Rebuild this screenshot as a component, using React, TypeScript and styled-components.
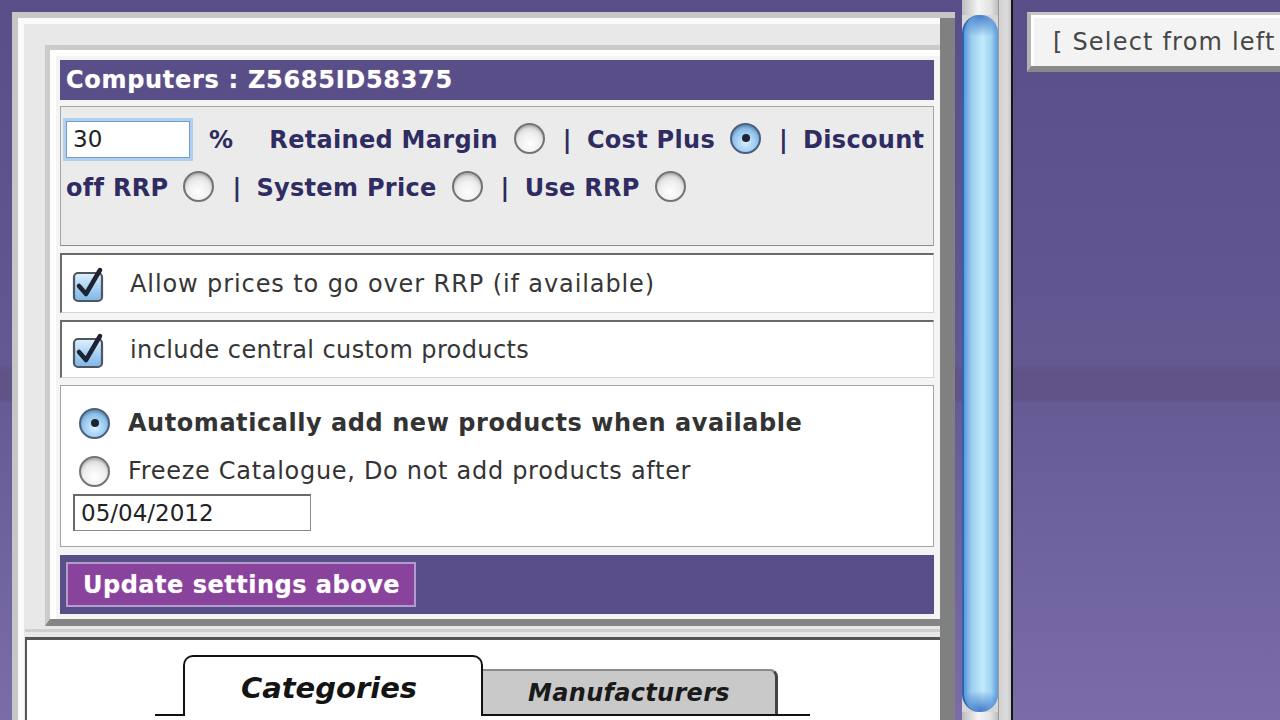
import React from "react";
import styled, { createGlobalStyle } from "styled-components";

const Global = createGlobalStyle`
  html, body {
    margin: 0;
    padding: 0;
    width: 1280px;
    height: 720px;
    overflow: hidden;
  }
  body {
    font-family: "DejaVu Sans", Verdana, sans-serif;
    background: linear-gradient(180deg, #5a4e88 0%, #625690 41%, #655992 50.5%, #5f5387 51.5%, #5f5387 55.5%, #675b95 56%, #7a6da7 100%);
  }
  * { box-sizing: border-box; }
`;

const Page = styled.div`
  display: flex;
  width: 1280px;
  height: 720px;
`;

const LeftPane = styled.div`
  flex: none;
  width: 940px;
  height: 720px;
  padding: 12px 0 0 12px;
  display: flex;
`;

const Frame = styled.div`
  flex: 1;
  display: flex;
  flex-direction: column;
  background: #e8e8e8;
  border-top: 6px solid #c6c6c6;
  border-left: 6px solid #c6c6c6;
  box-shadow: inset 6px 6px 0 #fafafa;
  padding-left: 7px;
`;

const InnerPanel = styled.div`
  margin: 27px 0 0 20px;
  display: flex;
  flex-direction: column;
  background: #f4f4f4;
  border-top: 5px solid #cbcbcb;
  border-left: 5px solid #cbcbcb;
  border-bottom: 7px solid #858585;
  box-shadow: inset 6px 6px 0 #ffffff;
  padding: 10px 6px 5px 10px;
`;

const Header = styled.div`
  height: 40px;
  line-height: 41px;
  background: #5a4e88;
  color: #ffffff;
  font-weight: bold;
  font-size: 24px;
  letter-spacing: 0.7px;
  padding-left: 6px;
  text-shadow: 0 0 1px rgba(255, 255, 255, 0.5);
`;

const Options = styled.div`
  margin-top: 6px;
  height: 140px;
  background: #ebebeb;
  border: 1px solid #a6a6a6;
  border-bottom-color: #8c8c8c;
  padding: 9px 0 0 5px;
  font-weight: bold;
  font-size: 24px;
  letter-spacing: 0.3px;
  line-height: 48px;
  color: #2f2c62;
`;

const Label = styled.span``;

const NumInput = styled.input`
  display: inline-block;
  vertical-align: middle;
  width: 124px;
  height: 37px;
  margin: 0;
  border: 1px solid #6f9fd2;
  box-shadow: 0 0 0 3px #b3cfee;
  background: #ffffff;
  font-family: "DejaVu Sans", Verdana, sans-serif;
  font-size: 23px;
  color: #222;
  padding: 0 0 0 6px;
  outline: none;
  position: relative;
  top: -2px;
`;

const Pct = styled.span`
  margin: 0 36px 0 19px;
`;

const Sep = styled.span`
  font-weight: bold;
  margin: 0 15px 0 18px;
`;

const RadioDot = styled.span<{ $on?: boolean; $gap?: number }>`
  display: inline-block;
  vertical-align: middle;
  position: relative;
  top: -3px;
  width: 31px;
  height: 31px;
  border-radius: 50%;
  margin-left: ${(p) => p.$gap ?? 15}px;
  border: 2px solid ${(p) => (p.$on ? "#4a5f7e" : "#737373")};
  background: ${(p) =>
    p.$on
      ? "radial-gradient(circle at 50% 65%, #d7efff 0%, #9fcdf1 45%, #5f98cf 100%)"
      : "radial-gradient(circle at 50% 70%, #ffffff 0%, #efefef 45%, #c4c4c4 100%)"};
  box-shadow: inset 0 2px 2px rgba(0, 0, 0, 0.18);
  &::after {
    content: "";
    display: ${(p) => (p.$on ? "block" : "none")};
    position: absolute;
    left: 50%;
    top: 50%;
    width: 8px;
    height: 8px;
    margin: -4px 0 0 -4px;
    border-radius: 50%;
    background: #1c2530;
  }
`;

const CheckRow = styled.div<{ $h: number; $ls: number }>`
  margin-top: 7px;
  height: ${(p) => p.$h}px;
  display: flex;
  align-items: center;
  gap: 24px;
  padding-left: 10px;
  background: #ffffff;
  border-top: 2px solid #6a6a6a;
  border-left: 2px solid #6a6a6a;
  border-right: 1px solid #d4d4d4;
  border-bottom: 1px solid #d4d4d4;
  font-size: 24px;
  letter-spacing: ${(p) => p.$ls}px;
  color: #363636;
`;

const Box = styled.div`
  margin-top: 7px;
  height: 162px;
  background: #ffffff;
  border: 1px solid #a4a4a4;
  padding: 13px 0 0 12px;
  display: flex;
  flex-direction: column;
  font-size: 24px;
  color: #333333;
`;

const ChoiceRow = styled.div<{ $bold?: boolean }>`
  height: 48px;
  display: flex;
  align-items: center;
  gap: 18px;
  padding-left: 6px;
  font-weight: ${(p) => (p.$bold ? "bold" : "normal")};
  letter-spacing: ${(p) => (p.$bold ? "0.55px" : "0.7px")};
`;

const ChoiceRadio = styled(RadioDot)`
  top: 0;
  margin-left: 0;
  flex: none;
`;

const DateInput = styled.input`
  width: 238px;
  height: 37px;
  margin: -1px 0 0 0;
  border: 1px solid #8a8a8a;
  border-top: 2px solid #6a6a6a;
  border-left: 2px solid #6a6a6a;
  background: #ffffff;
  font-family: "DejaVu Sans", Verdana, sans-serif;
  font-size: 23px;
  color: #222;
  padding: 0 0 0 6px;
  outline: none;
`;

const ButtonBar = styled.div`
  margin-top: 8px;
  height: 59px;
  background: #5a4e88;
  padding: 7px 6px;
  display: flex;
`;

const UpdateButton = styled.button`
  width: 350px;
  height: 45px;
  background: #8a439d;
  border: 2px solid #b29ccb;
  color: #ffffff;
  font-family: "DejaVu Sans", Verdana, sans-serif;
  font-weight: bold;
  font-size: 24px;
  letter-spacing: 0.5px;
  text-align: left;
  padding: 0 0 0 15px;
  text-shadow: 0 0 1px rgba(255, 255, 255, 0.5);
  cursor: pointer;
`;

const FrameRule = styled.div`
  margin-top: 3px;
  height: 3px;
  background: #cfcfcf;
`;

const TabBox = styled.div`
  flex: 1;
  margin-top: 5px;
  background: #ffffff;
  border-top: 3px solid #555555;
  border-left: 2px solid #555555;
  padding: 16px 0 0 128px;
`;

const TabStrip = styled.div`
  width: 655px;
  height: 60px;
  display: flex;
  align-items: flex-end;
  padding-left: 28px;
  border-bottom: 2px solid #111111;
`;

const ActiveTab = styled.div`
  width: 300px;
  height: 61px;
  margin-bottom: -2px;
  display: flex;
  align-items: flex-start;
  justify-content: center;
  padding: 14px 8px 0 0;
  background: #ffffff;
  border: 2px solid #111111;
  border-bottom: none;
  border-radius: 10px 10px 0 0;
  font-weight: bold;
  font-style: italic;
  font-size: 29px;
  color: #141414;
`;

const Tab = styled.div`
  width: 295px;
  height: 45px;
  display: flex;
  align-items: center;
  justify-content: center;
  padding-top: 1px;
  background: #c9c9c9;
  border-top: 2px solid #8a8a8a;
  border-right: 3px solid #444444;
  border-radius: 0 8px 0 0;
  font-weight: bold;
  font-style: italic;
  font-size: 24px;
  letter-spacing: 0.3px;
  color: #1a1a1a;
`;

const ScrollCol = styled.div`
  flex: none;
  width: 73px;
  height: 720px;
  display: flex;
`;

const Rail = styled.div`
  width: 15px;
  background: linear-gradient(180deg, transparent 0 12px, #c6c6c6 12px 18px, #808080 18px);
`;

const Gutter = styled.div`
  width: 7px;
`;

const Track = styled.div`
  width: 36px;
  display: flex;
  flex-direction: column;
  background: #d6d6d6;
`;

const TrackCap = styled.div<{ $h: number }>`
  height: ${(p) => p.$h}px;
  flex: none;
  background: linear-gradient(90deg, #bdbdbd, #f4f4f4 45%, #e2e2e2 80%, #bdbdbd);
`;

const Thumb = styled.div`
  flex: 1;
  border-radius: 18px;
  border-left: 2px solid #2c63b5;
  background:
    radial-gradient(ellipse 80% 22px at 50% 100%, rgba(40, 100, 190, 0.85), rgba(40, 100, 190, 0) 100%),
    radial-gradient(ellipse 80% 22px at 50% 0%, rgba(40, 100, 190, 0.8), rgba(40, 100, 190, 0) 100%),
    linear-gradient(90deg, #5a96da 0%, #9ccdf0 22%, #c2ebfb 55%, #9ed3f2 80%, #5a96d8 100%);
  box-shadow: inset -1px 0 0 #6f9fd0;
`;

const LightRail = styled.div`
  width: 13px;
  background: linear-gradient(90deg, #9a9a9a 0 1px, #d2d2d2 1px, #dcdcdc 70%, #c4c4c4);
`;

const DarkLine = styled.div`
  width: 2px;
  background: #151515;
`;

const RightPane = styled.div`
  flex: 1;
  min-width: 0;
  overflow: hidden;
  padding: 12px 0 0 14px;
`;

const SelectBox = styled.div`
  width: 320px;
  height: 60px;
  display: flex;
  align-items: center;
  padding: 3px 0 0 22px;
  white-space: nowrap;
  background: #f3f3f3;
  border-top: 3px solid #c6c6c6;
  border-left: 4px solid #b4b4b4;
  border-bottom: 6px solid #898989;
  box-shadow: inset 3px 3px 0 #ffffff;
  font-size: 24px;
  letter-spacing: 1.2px;
  color: #464646;
`;

const CheckIcon = () => (
  <svg width="34" height="40" viewBox="0 0 34 40" style={{ flex: "none" }}>
    <defs>
      <linearGradient id="cbfill" x1="0" y1="0" x2="0" y2="1">
        <stop offset="0" stopColor="#e2f1fd" />
        <stop offset="0.5" stopColor="#a9d2f4" />
        <stop offset="1" stopColor="#7fb6e6" />
      </linearGradient>
    </defs>
    <rect x="2" y="9" width="28" height="28" rx="4" fill="url(#cbfill)" stroke="#4f5561" strokeWidth="2.2" />
    <path d="M7 22 L14 30 L28 6" fill="none" stroke="#1d2330" strokeWidth="4.5" strokeLinecap="round" strokeLinejoin="round" />
  </svg>
);

export default function App() {
  return (
    <>
      <Global />
      <Page>
        <LeftPane>
          <Frame>
            <InnerPanel>
              <Header>Computers : Z5685ID58375</Header>
              <Options>
                <NumInput defaultValue="30" />
                <Pct>%</Pct>
                <Label>Retained Margin</Label>
                <RadioDot $gap={16} />
                <Sep>|</Sep>
                <Label>Cost Plus</Label>
                <RadioDot $on />
                <Sep>|</Sep>
                <Label>Discount</Label> <Label>off RRP</Label>
                <RadioDot />
                <Sep>|</Sep>
                <Label>System Price</Label>
                <RadioDot />
                <Sep>|</Sep>
                <Label>Use RRP</Label>
                <RadioDot />
              </Options>
              <CheckRow $h={60} $ls={0.9}>
                <CheckIcon />
                <span>Allow prices to go over RRP (if available)</span>
              </CheckRow>
              <CheckRow $h={58} $ls={0.4}>
                <CheckIcon />
                <span>include central custom products</span>
              </CheckRow>
              <Box>
                <ChoiceRow $bold>
                  <ChoiceRadio $on />
                  <span>Automatically add new products when available</span>
                </ChoiceRow>
                <ChoiceRow>
                  <ChoiceRadio />
                  <span>Freeze Catalogue, Do not add products after</span>
                </ChoiceRow>
                <DateInput defaultValue="05/04/2012" />
              </Box>
              <ButtonBar>
                <UpdateButton>Update settings above</UpdateButton>
              </ButtonBar>
            </InnerPanel>
            <FrameRule />
            <TabBox>
              <TabStrip>
                <ActiveTab>Categories</ActiveTab>
                <Tab>Manufacturers</Tab>
              </TabStrip>
            </TabBox>
          </Frame>
        </LeftPane>
        <ScrollCol>
          <Rail />
          <Gutter />
          <Track>
            <TrackCap $h={15} />
            <Thumb />
            <TrackCap $h={8} />
          </Track>
          <LightRail />
          <DarkLine />
        </ScrollCol>
        <RightPane>
          <SelectBox>[ Select from left</SelectBox>
        </RightPane>
      </Page>
    </>
  );
}
